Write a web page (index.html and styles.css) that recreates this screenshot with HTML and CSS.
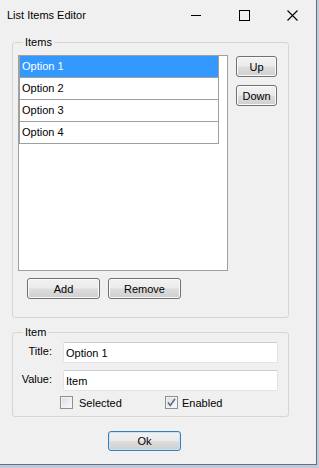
FILE: index.html
```html
<!DOCTYPE html>
<html lang="en">
<head>
    <meta charset="UTF-8">
    <meta name="viewport" content="width=device-width, initial-scale=1.0">
    <title>List Items Editor</title>
<link rel="stylesheet" href="styles.css">
</head>
<body>
    <div class="window">
        <div class="titlebar">
            <span class="title">List Items Editor</span>
            <div class="controls">
                <span class="ctl">
                    <svg width="10" height="10" viewBox="0 0 10 10"><path d="M0 5.5h10" stroke="#000" stroke-width="1"/></svg>
                </span>
                <span class="ctl">
                    <svg width="11" height="11" viewBox="0 0 11 11"><rect x="0.5" y="0.5" width="10" height="10" fill="none" stroke="#000" stroke-width="1"/></svg>
                </span>
                <span class="ctl">
                    <svg width="11" height="11" viewBox="0 0 11 11"><path d="M0.5 0.5L10.5 10.5M10.5 0.5L0.5 10.5" stroke="#000" stroke-width="1.1"/></svg>
                </span>
            </div>
        </div>

        <!-- Items group -->
        <fieldset class="group items-group">
            <legend>Items</legend>
            <div class="items-row">
                <div class="listbox">
                    <div class="list-item selected">Option 1</div>
                    <div class="list-item">Option 2</div>
                    <div class="list-item">Option 3</div>
                    <div class="list-item">Option 4</div>
                </div>
                <div class="side">
                    <button class="btn small">Up</button>
                    <button class="btn small">Down</button>
                </div>
            </div>
            <div class="list-actions">
                <button class="btn">Add</button>
                <button class="btn">Remove</button>
            </div>
        </fieldset>

        <!-- Item group -->
        <fieldset class="group item-group">
            <legend>Item</legend>
            <div class="form">
                <label class="field-label">Title:</label>
                <input class="field" type="text" value="Option 1">
                <label class="field-label">Value:</label>
                <input class="field" type="text" value="Item">
            </div>
            <div class="checks">
                <span class="check">
                    <span class="box"></span>
                    <span>Selected</span>
                </span>
                <span class="check enabled">
                    <span class="box">
                        <svg width="11" height="11" viewBox="0 0 11 11"><path d="M2 5.5L4.3 8.5L9 1.8" fill="none" stroke="#5a6d98" stroke-width="1.6"/></svg>
                    </span>
                    <span>Enabled</span>
                </span>
            </div>
        </fieldset>

        <div class="footer">
            <button class="btn ok">Ok</button>
        </div>
    </div>
</body>
</html>
```

FILE: styles.css
```css
body {
    margin: 0;
    background: #c3cad4;
    font-family: 'Liberation Sans', Arial, sans-serif;
    font-size: 11px;
    color: #000;
}
.window {
    width: 317px;
    height: 465px;
    box-sizing: border-box;
    background: #f0f0f0;
    border-right: 1px solid #5d7093;
    border-bottom: 1px solid #5d7093;
    display: flex;
    flex-direction: column;
}
.titlebar {
    height: 30px;
    display: flex;
    align-items: center;
    padding-left: 7px;
    flex-shrink: 0;
}
.title {
    flex: 1;
    padding-bottom: 1px;
}
.controls {
    display: flex;
}
.ctl {
    width: 48px;
    height: 30px;
    display: flex;
    align-items: center;
    justify-content: center;
}
.ctl svg {
    display: block;
}
.group {
    margin: 0 0 0 12px;
    width: 277px;
    box-sizing: border-box;
    border: 1px solid #d5d5d5;
    border-radius: 3px;
    min-width: 0;
}
.group legend {
    padding: 0 2px;
    margin-left: 5px;
    line-height: 13px;
}
.items-group {
    margin-top: 6px;
    padding: 6px 11px 18px 5px;
}
.items-row {
    display: flex;
    gap: 8px;
}
.listbox {
    width: 210px;
    height: 216px;
    box-sizing: border-box;
    border: 1px solid #a0a0a0;
    background: #fff;
}
.list-item {
    width: 200px;
    height: 22px;
    box-sizing: border-box;
    border: 1px solid #a0a0a0;
    border-top: none;
    padding-left: 2px;
    line-height: 21px;
    background: #fff;
}
.list-item.selected {
    background: #3399ff;
    color: #fff;
}
.side {
    display: flex;
    flex-direction: column;
    gap: 8px;
    padding-top: 1px;
}
.btn {
    font-family: 'Liberation Sans', Arial, sans-serif;
    font-size: 11px;
    font-weight: normal;
    color: #000;
    width: 73px;
    height: 21px;
    padding: 0;
    border: 1px solid #707070;
    border-radius: 3px;
    background: linear-gradient(#f2f2f2 0%, #ebebeb 48%, #dddddd 52%, #cfcfcf 100%);
    box-shadow: inset 0 0 0 1px #fbfbfb;
}
.btn.small {
    width: 41px;
}
.list-actions {
    display: flex;
    gap: 8px;
    margin: 7px 0 0 9px;
}
.item-group {
    margin-top: 8px;
    padding: 3px 11px 7px 5px;
}
.form {
    display: grid;
    grid-template-columns: 34px 215px;
    column-gap: 11px;
    row-gap: 7px;
    align-items: center;
}
.field-label {
    text-align: right;
    padding-bottom: 3px;
}
.field {
    font-family: 'Liberation Sans', Arial, sans-serif;
    font-size: 11px;
    height: 21px;
    box-sizing: border-box;
    border: 1px solid #e2e3ea;
    border-top-color: #c9cbd2;
    border-radius: 2px;
    padding: 0 2px;
    margin: 0;
    background: #fff;
}
.checks {
    display: flex;
    margin: 5px 0 0 42px;
}
.check {
    display: flex;
    align-items: center;
    gap: 6px;
    width: 105px;
}
.check.enabled {
    gap: 4px;
}
.box {
    width: 13px;
    height: 13px;
    box-sizing: border-box;
    border: 1px solid #8e8f8f;
    background: linear-gradient(135deg, #dcdcdc, #fbfbfb);
    box-shadow: inset 0 0 0 1px #f4f4f4;
    display: flex;
    align-items: center;
    justify-content: center;
}
.footer {
    padding: 14px 0 0 108px;
}
.btn.ok {
    height: 20px;
    border-color: #3c7fb1;
    box-shadow: inset 0 0 0 1px #c6e4f7;
}
```
